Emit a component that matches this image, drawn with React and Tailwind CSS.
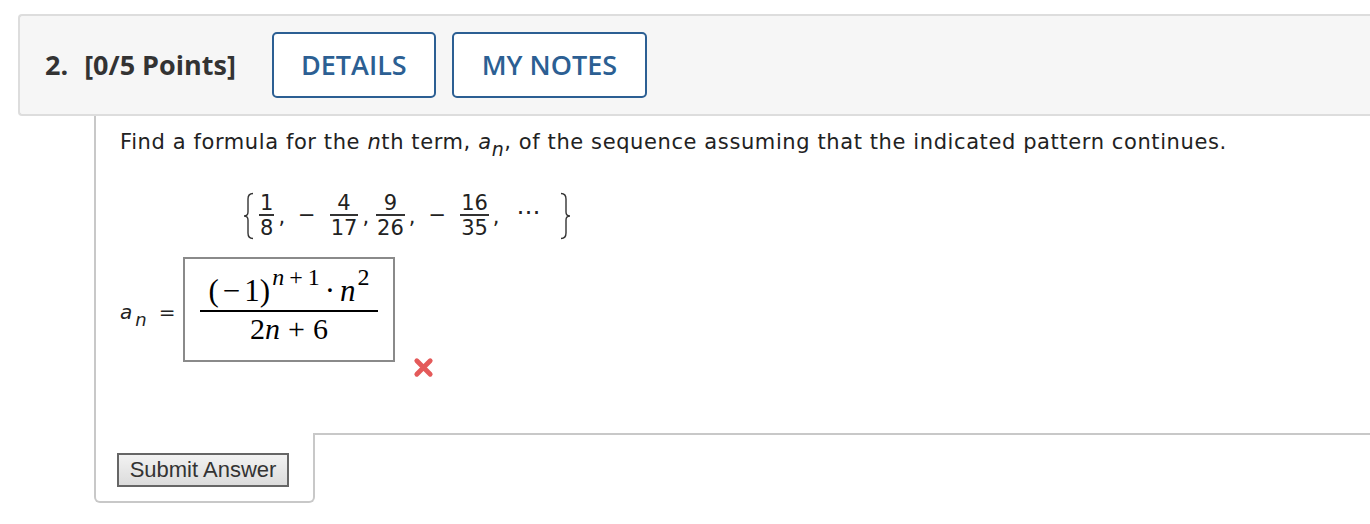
const Frac = ({ top, bottom }) => {
  return (
    <span className="inline-flex flex-col items-center px-[4px]">
      <span className="leading-[22px] px-[1px]">{top}</span>
      <span className="h-[2px] w-full bg-[#333]" />
      <span className="leading-[24px] px-[1px]">{bottom}</span>
    </span>
  );
};

const Brace = ({ flip }) => (
  <svg viewBox="0 0 12 48" className={"w-[12px] h-[48px]" + (flip ? " -scale-x-100" : "")}>
    <path
      d="M10 1.5 Q5 1.5 5 7 L5 20 Q5 24 1 24 Q5 24 5 28 L5 41 Q5 46.5 10 46.5"
      fill="none"
      stroke="#333"
      strokeWidth="1.4"
    />
  </svg>
);

const Comma = () => <span className="self-center leading-none mt-[2px] mr-[3px]">,</span>;

export default function App() {
  return (
    <div className="w-[1370px] h-[524px] bg-white overflow-hidden">
      <div className="mt-[14px] ml-[18px] h-[102px] bg-[#f6f6f6] border-2 border-r-0 border-[#dddddd] rounded-l-[4px] flex items-center font-['Open_Sans',sans-serif]">
        <span className="ml-[25px] font-bold text-[27px] text-[#333]">2.</span>
        <span className="ml-[16px] font-bold text-[27px] text-[#333]">[0/5 Points]</span>
        <button className="ml-[36px] w-[164px] h-[66px] border-2 border-[#2c5f93] rounded-[5px] bg-white text-[#2c5f93] font-semibold text-[27px]">
          DETAILS
        </button>
        <button className="ml-[16px] w-[195px] h-[66px] border-2 border-[#2c5f93] rounded-[5px] bg-white text-[#2c5f93] font-semibold text-[27px]">
          MY NOTES
        </button>
      </div>

      <div className="ml-[94px] border-l-2 border-[#c8c8c8] pl-[24px] pt-[12px] h-[317px] font-['DejaVu_Sans',sans-serif] text-[#222]">
        <p className="text-[21px] leading-[28px] tracking-[0.6px]">
          Find a formula for the <i>n</i>th term, <i>a</i>
          <span className="relative top-[7px] italic text-[19px]">n</span>, of the sequence assuming that the indicated pattern continues.
        </p>

        <div className="mt-[36px] ml-[123px] flex items-center text-[21px]">
          <Brace />
          <Frac top="1" bottom="8" />
          <Comma />
          <span className="mx-[10px]">−</span>
          <Frac top="4" bottom="17" />
          <Comma />
          <Frac top="9" bottom="26" />
          <Comma />
          <span className="mx-[10px]">−</span>
          <Frac top="16" bottom="35" />
          <Comma />
          <span className="ml-[14px] mr-[14px] mb-[8px] text-[24px] tracking-[4px]">⋯</span>
          <Brace flip />
        </div>

        <div className="mt-[17px] flex items-start">
          <div className="mt-[40px] w-[63px] flex items-center text-[20px]">
            <span className="italic">a</span>
            <span className="relative top-[7px] italic text-[18px] ml-[3px]">n</span>
            <span className="ml-[12px]">=</span>
          </div>
          <div className="w-[212px] h-[105px] border-2 border-[#8a8a8a] flex items-center justify-center font-['Liberation_Serif',serif] text-black">
            <div className="flex flex-col items-center">
              <div className="flex items-end text-[31px] leading-[33px] px-[2px]">
                <span>(</span>
                <span className="mx-[4px]">−</span>
                <span>1</span>
                <span>)</span>
                <span className="self-start -mt-[9px] text-[24px] leading-[24px] ml-[2px]">
                  <i>n</i>
                  <span className="mx-[5px]">+</span>1
                </span>
                <span className="mx-[5px]">·</span>
                <i>n</i>
                <span className="self-start -mt-[9px] text-[24px] leading-[24px] ml-[2px]">2</span>
              </div>
              <span className="h-[2px] w-[178px] bg-black mt-[3px]" />
              <div className="text-[30px] leading-[34px]">
                2<i>n</i>
                <span className="mx-[8px]">+</span>6
              </div>
            </div>
          </div>
          <svg viewBox="0 0 24 24" className="mt-[99px] ml-[17px] w-[23px] h-[23px]">
            <path d="M5 5 L19 19 M19 5 L5 19" stroke="#e45a5a" strokeWidth="5" strokeLinecap="round" />
          </svg>
        </div>
      </div>

      <div className="flex h-[70px]">
        <div className="ml-[94px] w-[221px] border-l-2 border-b-2 border-r-2 border-[#c8c8c8] rounded-b-[6px] pl-[21px] pt-[20px]">
          <button className="w-[172px] h-[34px] border-2 border-[#666] bg-gradient-to-b from-[#f2f2f2] to-[#dcdcdc] font-['Liberation_Sans',sans-serif] text-[22px] leading-[28px] text-[#333]">
            Submit Answer
          </button>
        </div>
        <div className="flex-1 border-t-2 border-[#c8c8c8]" />
      </div>
    </div>
  );
}
